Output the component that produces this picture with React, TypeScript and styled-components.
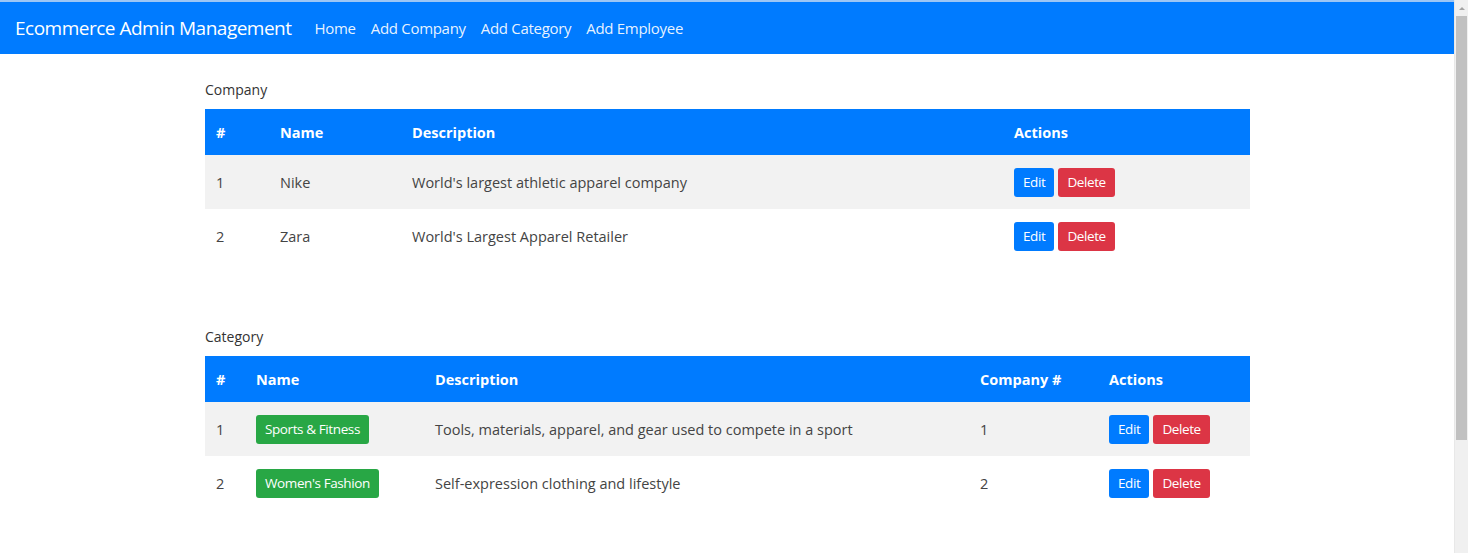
import React from 'react';
import styled, { createGlobalStyle } from 'styled-components';

const GlobalStyle = createGlobalStyle`
  body {
    margin: 0;
    font-family: "Open Sans", "Noto Sans", sans-serif;
    color: #333;
    background: #fff;
  }
`;

const Page = styled.div`
  margin-right: 13px;
  min-height: 553px;
`;

// browser scrollbar drawn on the right edge, over the page
const Scrollbar = styled.div`
  position: fixed;
  top: 0;
  right: 0;
  bottom: 0;
  width: 13px;
  background: #f0f0f0;
  border-left: 1px solid #e8e8e8;
`;

const ScrollArrow = styled.div`
  height: 16px;
  display: flex;
  align-items: center;
  justify-content: center;
  &::before {
    content: '';
    border-left: 3px solid transparent;
    border-right: 3px solid transparent;
    border-bottom: 3px solid #a3a3a3;
  }
`;

const ScrollThumb = styled.div`
  margin: 0 1px;
  height: 424px;
  background: #c1c1c1;
`;

const Navbar = styled.nav`
  display: flex;
  align-items: center;
  height: 52px;
  padding: 0 15px;
  background: #007bff;
  border-top: 2px solid #9cc6f5;
`;

const Brand = styled.a`
  font-size: 19px;
  color: #fff;
  margin-right: 23px;
  letter-spacing: -0.5px;
`;

const NavLinks = styled.div`
  display: flex;
  gap: 15px;
`;

const NavLink = styled.a`
  font-size: 15px;
  color: rgba(255, 255, 255, 0.92);
  letter-spacing: -0.3px;
`;

const Container = styled.main`
  width: 1045px;
  margin: 0 auto;
  padding-top: 26px;
`;

const Section = styled.section`
  margin-bottom: 64px;
`;

const Label = styled.div`
  font-size: 14px;
  margin-bottom: 10px;
  color: #333;
`;

const Table = styled.table`
  width: 100%;
  border-collapse: collapse;
  table-layout: fixed;
  font-size: 14.5px;
`;

const Th = styled.th`
  background: #007bff;
  color: #fff;
  text-align: left;
  font-weight: 700;
  height: 46px;
  padding: 0 11px;
`;

const Tr = styled.tr<{ $striped?: boolean }>`
  background: ${({ $striped }) => ($striped ? '#f2f2f2' : '#fff')};
  & + & td {
    border-top: 1px solid #e6e6e6;
  }
`;

const Td = styled.td`
  height: 54px;
  padding: 0 11px;
  color: #444;
  vertical-align: middle;
`;

const Btn = styled.button<{ $variant: 'primary' | 'danger' | 'success' }>`
  font-family: inherit;
  font-size: 13.5px;
  color: #fff;
  border: none;
  border-radius: 3px;
  height: 29px;
  padding: 0 9px;
  margin-right: 4px;
  letter-spacing: -0.4px;
  background: ${({ $variant }) =>
    $variant === 'primary' ? '#007bff' : $variant === 'danger' ? '#dc3545' : '#28a745'};
`;

const companies = [
  { id: 1, name: 'Nike', desc: "World's largest athletic apparel company" },
  { id: 2, name: 'Zara', desc: "World's Largest Apparel Retailer" },
];

const categories = [
  { id: 1, name: 'Sports & Fitness', desc: 'Tools, materials, apparel, and gear used to compete in a sport', company: 1 },
  { id: 2, name: "Women's Fashion", desc: 'Self-expression clothing and lifestyle', company: 2 },
];

function Actions() {
  return (
    <>
      <Btn $variant="primary">Edit</Btn>
      <Btn $variant="danger">Delete</Btn>
    </>
  );
}

function App() {
  return (
    <>
      <GlobalStyle />
      <Page>
        <Navbar>
          <Brand>Ecommerce Admin Management</Brand>
          <NavLinks>
            <NavLink>Home</NavLink>
            <NavLink>Add Company</NavLink>
            <NavLink>Add Category</NavLink>
            <NavLink>Add Employee</NavLink>
          </NavLinks>
        </Navbar>
        <Container>
          <Section>
            <Label>Company</Label>
            <Table>
              <colgroup>
                <col style={{ width: 64 }} />
                <col style={{ width: 132 }} />
                <col style={{ width: 602 }} />
                <col />
              </colgroup>
              <thead>
                <tr>
                  <Th>#</Th>
                  <Th>Name</Th>
                  <Th>Description</Th>
                  <Th>Actions</Th>
                </tr>
              </thead>
              <tbody>
                {companies.map((c, i) => (
                  <Tr key={c.id} $striped={i % 2 === 0}>
                    <Td>{c.id}</Td>
                    <Td>{c.name}</Td>
                    <Td>{c.desc}</Td>
                    <Td>
                      <Actions />
                    </Td>
                  </Tr>
                ))}
              </tbody>
            </Table>
          </Section>
          <Section>
            <Label>Category</Label>
            <Table>
              <colgroup>
                <col style={{ width: 40 }} />
                <col style={{ width: 179 }} />
                <col style={{ width: 545 }} />
                <col style={{ width: 129 }} />
                <col />
              </colgroup>
              <thead>
                <tr>
                  <Th>#</Th>
                  <Th>Name</Th>
                  <Th>Description</Th>
                  <Th>Company #</Th>
                  <Th>Actions</Th>
                </tr>
              </thead>
              <tbody>
                {categories.map((c, i) => (
                  <Tr key={c.id} $striped={i % 2 === 0}>
                    <Td>{c.id}</Td>
                    <Td>
                      <Btn $variant="success">{c.name}</Btn>
                    </Td>
                    <Td>{c.desc}</Td>
                    <Td>{c.company}</Td>
                    <Td>
                      <Actions />
                    </Td>
                  </Tr>
                ))}
              </tbody>
            </Table>
          </Section>
        </Container>
      </Page>
      <Scrollbar>
        <ScrollArrow />
        <ScrollThumb />
      </Scrollbar>
    </>
  );
}

export default App;
